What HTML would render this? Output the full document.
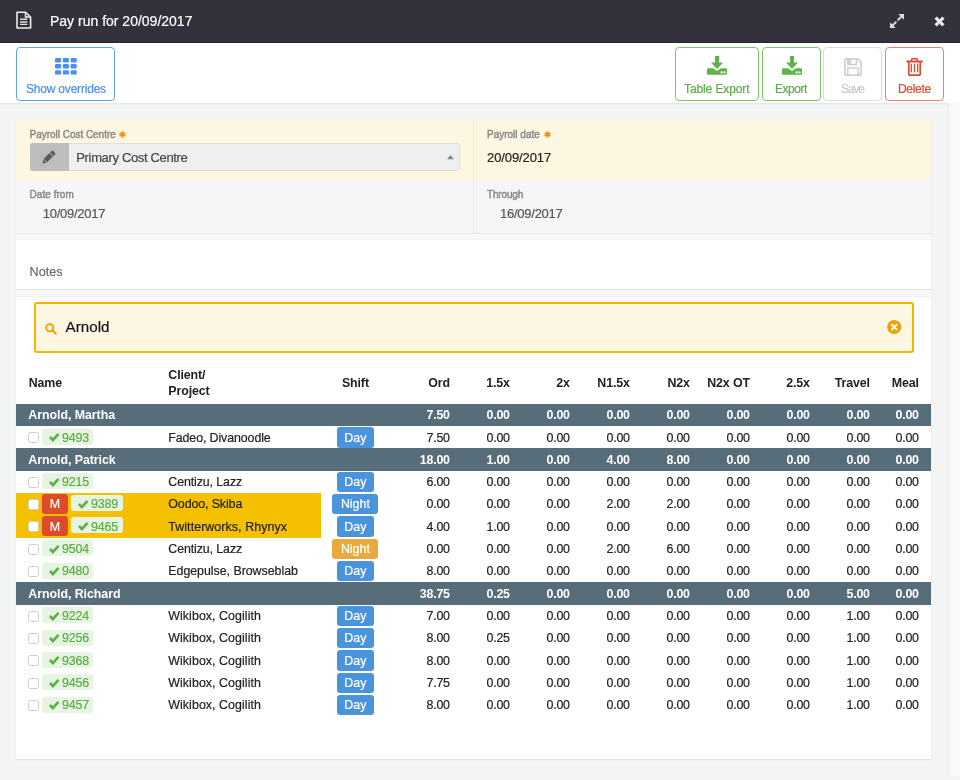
<!DOCTYPE html>
<html><head><meta charset="utf-8">
<style>
*{box-sizing:border-box;margin:0;padding:0}
html,body{width:960px;height:780px;overflow:hidden}
body{font-family:"Liberation Sans",sans-serif;background:#f3f4f4;position:relative;color:#222}
.t{position:absolute;white-space:nowrap;-webkit-text-stroke:0.2px currentColor}
.r{position:absolute}
svg{position:absolute;overflow:visible}
#wrap{position:absolute;left:0;top:0;width:960px;height:780px;will-change:transform}
</style></head><body><div id="wrap">
<div class="r" style="left:0px;top:0px;width:960px;height:43px;background:#33323c;border-bottom:1px solid #26252d;"></div>
<svg style="left:16px;top:10.5px" width="16" height="18" viewBox="0 0 16 18"><path d="M1 1.2h8.6l5 5v10.8h-13.6z" fill="none" stroke="#ececec" stroke-width="1.6" stroke-linejoin="round"/><path d="M9.5 1.2v4.9h5" fill="none" stroke="#ececec" stroke-width="1.5"/><path d="M4 8.3h7.3M4 11h7.3M4 13.4h7.3" stroke="#dcdcdc" stroke-width="1.4"/></svg>
<div class="t" style="left:50px;top:14.15px;font-size:14px;line-height:14px;color:#fff;font-weight:normal;">Pay run for 20/09/2017</div>
<svg style="left:889.5px;top:14px" width="14" height="14" viewBox="0 0 14 14"><path d="M8.3 0h5.7v5.7z M0 8.3v5.7h5.7z" fill="#dcdcdc"/><path d="M11.5 2.5L7.6 6.4M2.5 11.5l3.9-3.9" stroke="#dcdcdc" stroke-width="2"/></svg>
<svg style="left:934px;top:16px" width="11" height="11" viewBox="0 0 11 11"><path d="M1.6 1.6l7.8 7.8M9.4 1.6l-7.8 7.8" stroke="#e8e8e8" stroke-width="3.2"/></svg>
<div class="r" style="left:0px;top:43px;width:960px;height:60px;background:#fff;"></div>
<div class="r" style="left:0px;top:103px;width:960px;height:2px;background:linear-gradient(#e4e4e4,#f0f1f1);"></div>
<div class="r" style="left:16px;top:47px;width:99px;height:54px;border:1px solid #62a3ec;border-radius:4px;background:#fff"></div>
<svg style="left:55px;top:57.9px" width="23" height="17" viewBox="0 0 23 17"><g fill="#4590f2"><rect x="0.00" y="0.00" width="6.1" height="4.4" rx="1.2"/><rect x="0.00" y="6.10" width="6.1" height="4.4" rx="1.2"/><rect x="0.00" y="12.20" width="6.1" height="4.4" rx="1.2"/><rect x="7.80" y="0.00" width="6.1" height="4.4" rx="1.2"/><rect x="7.80" y="6.10" width="6.1" height="4.4" rx="1.2"/><rect x="7.80" y="12.20" width="6.1" height="4.4" rx="1.2"/><rect x="15.60" y="0.00" width="6.1" height="4.4" rx="1.2"/><rect x="15.60" y="6.10" width="6.1" height="4.4" rx="1.2"/><rect x="15.60" y="12.20" width="6.1" height="4.4" rx="1.2"/></g></svg>
<div class="t" style="left:26px;top:83.14px;font-size:12px;line-height:12px;color:#4a8ff0;font-weight:normal;letter-spacing:-0.2px;">Show overrides</div>
<div class="r" style="left:675px;top:47px;width:84px;height:54px;border:1px solid #7fc36e;border-radius:4px;background:#fff"></div>
<div class="r" style="left:762px;top:47px;width:59px;height:54px;border:1px solid #7fc36e;border-radius:4px;background:#fff"></div>
<div class="r" style="left:823px;top:47px;width:59px;height:54px;border:1px solid #dcdcdc;border-radius:4px;background:#fff"></div>
<div class="r" style="left:885px;top:47px;width:59px;height:54px;border:1px solid #e98171;border-radius:4px;background:#fff"></div>
<svg style="left:707px;top:56px" width="20" height="19" viewBox="0 0 20 19"><path d="M7.95 0.1h4.1v6.3h4l-6.05 6.5-6.05-6.5h4z" fill="#5fb34a"/><path d="M1.1 12.3h5l3.9 2.6 3.9-2.6h5a1.1 1.1 0 0 1 1.1 1.1v4.3a1.1 1.1 0 0 1-1.1 1.1h-17.8a1.1 1.1 0 0 1-1.1-1.1v-4.3a1.1 1.1 0 0 1 1.1-1.1z" fill="#5fb34a"/><circle cx="14.6" cy="16.4" r="1.15" fill="#fff"/><circle cx="17.6" cy="16.4" r="1.15" fill="#fff"/></svg>
<svg style="left:782px;top:56px" width="20" height="19" viewBox="0 0 20 19"><path d="M7.95 0.1h4.1v6.3h4l-6.05 6.5-6.05-6.5h4z" fill="#5fb34a"/><path d="M1.1 12.3h5l3.9 2.6 3.9-2.6h5a1.1 1.1 0 0 1 1.1 1.1v4.3a1.1 1.1 0 0 1-1.1 1.1h-17.8a1.1 1.1 0 0 1-1.1-1.1v-4.3a1.1 1.1 0 0 1 1.1-1.1z" fill="#5fb34a"/><circle cx="14.6" cy="16.4" r="1.15" fill="#fff"/><circle cx="17.6" cy="16.4" r="1.15" fill="#fff"/></svg>
<div class="t" style="left:684px;top:82.64px;font-size:12px;line-height:12px;color:#5aad45;font-weight:normal;letter-spacing:-0.1px;">Table Export</div>
<div class="t" style="left:775px;top:82.64px;font-size:12px;line-height:12px;color:#5aad45;font-weight:normal;letter-spacing:-0.45px;">Export</div>
<svg style="left:844px;top:58px" width="18" height="18" viewBox="0 0 18 18"><path d="M2 0.9h11.6l3.5 3.5v11.6a1.1 1.1 0 0 1-1.1 1.1h-14a1.1 1.1 0 0 1-1.1-1.1v-14a1.1 1.1 0 0 1 1.1-1.1z" fill="none" stroke="#cfcfcf" stroke-width="1.7" stroke-linejoin="round"/><path d="M3.8 1v5.4h8.6v-5.4" fill="none" stroke="#cfcfcf" stroke-width="1.5"/><rect x="3.8" y="1" width="3.4" height="5.4" fill="#cfcfcf"/><path d="M3.8 17v-6.9h10.4v6.9" fill="none" stroke="#cfcfcf" stroke-width="1.5"/></svg>
<div class="t" style="left:841px;top:82.64px;font-size:12px;line-height:12px;color:#c9c9c9;font-weight:normal;letter-spacing:-1.15px;">Save</div>
<svg style="left:906px;top:58px" width="17" height="18" viewBox="0 0 17 18"><path d="M1 3.5h15" stroke="#e04a2f" stroke-width="1.8" stroke-linecap="round"/><path d="M5.5 3.5v-1.8a1 1 0 0 1 1-1h4a1 1 0 0 1 1 1v1.8" fill="none" stroke="#e04a2f" stroke-width="1.6"/><path d="M2.8 4v12a1.2 1.2 0 0 0 1.2 1.2h9a1.2 1.2 0 0 0 1.2-1.2v-12" fill="none" stroke="#e04a2f" stroke-width="1.7"/><path d="M5.3 5.8v8.4M8.5 5.8v8.4M11.7 5.8v8.4" stroke="#e04a2f" stroke-width="1.3"/></svg>
<div class="t" style="left:898px;top:82.64px;font-size:12px;line-height:12px;color:#e04a2f;font-weight:normal;letter-spacing:-0.3px;">Delete</div>
<div class="r" style="left:948px;top:103px;width:12px;height:673px;background:#f9f9f9;border-left:1px solid #e9e9e9;"></div>
<div class="r" style="left:16px;top:120px;width:915px;height:639px;background:#fff;box-shadow:0 1px 1px rgba(0,0,0,0.07);"></div>
<div class="r" style="left:16px;top:120px;width:915px;height:60px;background:#fdf6e0;"></div>
<div class="r" style="left:473px;top:120px;width:1px;height:60px;background:#f1ead3;"></div>
<div class="t" style="left:29.6px;top:129.53px;font-size:10px;line-height:10px;color:#8a8a8a;font-weight:normal;letter-spacing:-0.03px;-webkit-text-stroke:0.45px #8a8a8a;">Payroll Cost Centre</div>
<svg style="left:119px;top:131px" width="7" height="7" viewBox="0 0 7 7"><path d="M3.5 0.3v6.4M0.6 1.9l5.8 3.2M0.6 5.1l5.8-3.2" stroke="#f18b0c" stroke-width="1.75"/></svg>
<div class="r" style="left:30px;top:143px;width:430px;height:28px;background:#efefef;border:1px solid #dedede;border-radius:3px;"></div>
<div class="r" style="left:30px;top:143px;width:39px;height:28px;background:#bdbdbd;border-radius:3px 0 0 3px;"></div>
<svg style="left:41.7px;top:151px" width="13" height="13" viewBox="0 0 13 13"><path d="M0.6 12.4L1.26 8.34 4.66 11.74z" fill="#5a5a5a"/><path d="M1.76 7.84L7.48 2.12 10.88 5.52 5.16 11.24z" fill="#5a5a5a"/><path d="M8.05 1.55L9.75 -0.15Q10.6 -0.6 11.45 0.1L13.0 1.7Q13.6 2.5 13.15 3.25L11.45 4.95z" fill="#5a5a5a"/></svg>
<div class="t" style="left:76.3px;top:150.60px;font-size:13px;line-height:13px;color:#444;font-weight:normal;letter-spacing:-0.35px;">Primary Cost Centre</div>
<svg style="left:447.4px;top:154.6px" width="7" height="5" viewBox="0 0 7 5"><path d="M0 4.3L3.4 0 6.8 4.3z" fill="#888"/></svg>
<div class="t" style="left:487px;top:129.53px;font-size:10px;line-height:10px;color:#8a8a8a;font-weight:normal;-webkit-text-stroke:0.45px #8a8a8a;">Payroll date</div>
<svg style="left:544px;top:131px" width="7" height="7" viewBox="0 0 7 7"><path d="M3.5 0.3v6.4M0.6 1.9l5.8 3.2M0.6 5.1l5.8-3.2" stroke="#f18b0c" stroke-width="1.75"/></svg>
<div class="t" style="left:487px;top:151.20px;font-size:13px;line-height:13px;color:#222;font-weight:normal;letter-spacing:-0.1px;">20/09/2017</div>
<div class="r" style="left:16px;top:180px;width:915px;height:53px;background:#f6f6f6;"></div>
<div class="r" style="left:473px;top:180px;width:1px;height:53px;background:#e9e9e9;"></div>
<div class="r" style="left:16px;top:233px;width:915px;height:1px;background:#e6e6e6;"></div>
<div class="r" style="left:16px;top:234px;width:915px;height:6px;background:#f8f8f8;"></div>
<div class="r" style="left:16px;top:239px;width:915px;height:1px;background:#f0f0f0;"></div>
<div class="t" style="left:29.5px;top:190.13px;font-size:10px;line-height:10px;color:#8a8a8a;font-weight:normal;letter-spacing:0.05px;-webkit-text-stroke:0.45px #8a8a8a;">Date from</div>
<div class="t" style="left:42.7px;top:206.90px;font-size:13px;line-height:13px;color:#555;font-weight:normal;letter-spacing:-0.25px;">10/09/2017</div>
<div class="t" style="left:487px;top:190.13px;font-size:10px;line-height:10px;color:#8a8a8a;font-weight:normal;letter-spacing:-0.15px;-webkit-text-stroke:0.45px #8a8a8a;">Through</div>
<div class="t" style="left:500px;top:206.90px;font-size:13px;line-height:13px;color:#555;font-weight:normal;letter-spacing:-0.25px;">16/09/2017</div>
<div class="t" style="left:29.6px;top:265.93px;font-size:12.6px;line-height:12.6px;color:#6b6b6b;font-weight:normal;">Notes</div>
<div class="r" style="left:16px;top:289px;width:915px;height:1px;background:#e6e6e6;"></div>
<div class="r" style="left:16px;top:290px;width:915px;height:7px;background:#f8f8f8;"></div>
<div class="r" style="left:16px;top:296px;width:915px;height:1px;background:#f0f0f0;"></div>
<div class="r" style="left:34px;top:301.5px;width:880px;height:51px;background:#fdf6e3;border:2px solid #f4b400;border-radius:3px;"></div>
<svg style="left:45px;top:322.5px" width="12" height="12" viewBox="0 0 12 12"><circle cx="4.7" cy="4.7" r="3.6" fill="none" stroke="#f0a000" stroke-width="1.8"/><path d="M7.4 7.4l3.4 3.4" stroke="#f0a000" stroke-width="2" stroke-linecap="round"/></svg>
<div class="t" style="left:65.6px;top:319.33px;font-size:15.2px;line-height:15.2px;color:#151515;font-weight:normal;">Arnold</div>
<svg style="left:887px;top:320px" width="14" height="14" viewBox="0 0 14 14"><circle cx="7.2" cy="7" r="7.1" fill="#f0a000"/><path d="M4.3 4.1l5.8 5.8M10.1 4.1l-5.8 5.8" stroke="#fff" stroke-width="2"/></svg>
<div class="t" style="left:28.7px;top:377.00px;font-size:12.4px;line-height:12.4px;color:#222;font-weight:bold;letter-spacing:-0.1px;-webkit-text-stroke:0;">Name</div>
<div class="t" style="left:168.3px;top:368.70px;font-size:12.4px;line-height:12.4px;color:#222;font-weight:bold;letter-spacing:-0.1px;-webkit-text-stroke:0;">Client/</div>
<div class="t" style="left:168.3px;top:384.70px;font-size:12.4px;line-height:12.4px;color:#222;font-weight:bold;letter-spacing:-0.1px;-webkit-text-stroke:0;">Project</div>
<div class="t" style="left:255.39999999999998px;width:200px;text-align:center;top:377.00px;font-size:12.4px;line-height:12.4px;color:#222;font-weight:bold;letter-spacing:-0.1px;-webkit-text-stroke:0;">Shift</div>
<div class="t" style="right:510px;top:377.00px;font-size:12.4px;line-height:12.4px;color:#222;font-weight:bold;letter-spacing:-0.1px;margin-right:0.1px;-webkit-text-stroke:0;">Ord</div>
<div class="t" style="right:450px;top:377.00px;font-size:12.4px;line-height:12.4px;color:#222;font-weight:bold;letter-spacing:-0.1px;margin-right:0.1px;-webkit-text-stroke:0;">1.5x</div>
<div class="t" style="right:390px;top:377.00px;font-size:12.4px;line-height:12.4px;color:#222;font-weight:bold;letter-spacing:-0.1px;margin-right:0.1px;-webkit-text-stroke:0;">2x</div>
<div class="t" style="right:330px;top:377.00px;font-size:12.4px;line-height:12.4px;color:#222;font-weight:bold;letter-spacing:-0.1px;margin-right:0.1px;-webkit-text-stroke:0;">N1.5x</div>
<div class="t" style="right:270px;top:377.00px;font-size:12.4px;line-height:12.4px;color:#222;font-weight:bold;letter-spacing:-0.1px;margin-right:0.1px;-webkit-text-stroke:0;">N2x</div>
<div class="t" style="right:210px;top:377.00px;font-size:12.4px;line-height:12.4px;color:#222;font-weight:bold;letter-spacing:-0.1px;margin-right:0.1px;-webkit-text-stroke:0;">N2x OT</div>
<div class="t" style="right:150px;top:377.00px;font-size:12.4px;line-height:12.4px;color:#222;font-weight:bold;letter-spacing:-0.1px;margin-right:0.1px;-webkit-text-stroke:0;">2.5x</div>
<div class="t" style="right:90px;top:377.00px;font-size:12.4px;line-height:12.4px;color:#222;font-weight:bold;letter-spacing:-0.1px;margin-right:0.1px;-webkit-text-stroke:0;">Travel</div>
<div class="t" style="right:41px;top:377.00px;font-size:12.4px;line-height:12.4px;color:#222;font-weight:bold;letter-spacing:-0.1px;margin-right:0.1px;-webkit-text-stroke:0;">Meal</div>
<div class="r" style="left:16px;top:403.70px;width:915px;height:22.32px;background:#576d7a;"></div>
<div class="t" style="left:28.3px;top:409.20px;font-size:12.4px;line-height:12.4px;color:#fff;font-weight:bold;letter-spacing:-0.05px;-webkit-text-stroke:0;">Arnold, Martha</div>
<div class="t" style="right:510px;top:409.20px;font-size:12.4px;line-height:12.4px;color:#fff;font-weight:bold;letter-spacing:-0.2px;margin-right:0.2px;-webkit-text-stroke:0;">7.50</div>
<div class="t" style="right:450px;top:409.20px;font-size:12.4px;line-height:12.4px;color:#fff;font-weight:bold;letter-spacing:-0.2px;margin-right:0.2px;-webkit-text-stroke:0;">0.00</div>
<div class="t" style="right:390px;top:409.20px;font-size:12.4px;line-height:12.4px;color:#fff;font-weight:bold;letter-spacing:-0.2px;margin-right:0.2px;-webkit-text-stroke:0;">0.00</div>
<div class="t" style="right:330px;top:409.20px;font-size:12.4px;line-height:12.4px;color:#fff;font-weight:bold;letter-spacing:-0.2px;margin-right:0.2px;-webkit-text-stroke:0;">0.00</div>
<div class="t" style="right:270px;top:409.20px;font-size:12.4px;line-height:12.4px;color:#fff;font-weight:bold;letter-spacing:-0.2px;margin-right:0.2px;-webkit-text-stroke:0;">0.00</div>
<div class="t" style="right:210px;top:409.20px;font-size:12.4px;line-height:12.4px;color:#fff;font-weight:bold;letter-spacing:-0.2px;margin-right:0.2px;-webkit-text-stroke:0;">0.00</div>
<div class="t" style="right:150px;top:409.20px;font-size:12.4px;line-height:12.4px;color:#fff;font-weight:bold;letter-spacing:-0.2px;margin-right:0.2px;-webkit-text-stroke:0;">0.00</div>
<div class="t" style="right:90px;top:409.20px;font-size:12.4px;line-height:12.4px;color:#fff;font-weight:bold;letter-spacing:-0.2px;margin-right:0.2px;-webkit-text-stroke:0;">0.00</div>
<div class="t" style="right:41px;top:409.20px;font-size:12.4px;line-height:12.4px;color:#fff;font-weight:bold;letter-spacing:-0.2px;margin-right:0.2px;-webkit-text-stroke:0;">0.00</div>
<div class="r" style="left:28px;top:432.02px;width:11px;height:11px;background:#fff;border:1px solid #cdcdcd;border-radius:2.5px;"></div>
<div class="r" style="left:42px;top:428.82px;width:51px;height:16px;background:#e6f4e1;border-radius:3px;"></div>
<svg style="left:48.9px;top:433.02px" width="10" height="8" viewBox="0 0 10 8"><path d="M0.9 4.0l3 3 5.6-6.2" fill="none" stroke="#5bb146" stroke-width="2.6"/></svg>
<div class="t" style="left:62px;top:431.52px;font-size:12.4px;line-height:12.4px;color:#5aad45;font-weight:normal;letter-spacing:-0.1px;">9493</div>
<div class="t" style="left:168.3px;top:431.52px;font-size:12.4px;line-height:12.4px;color:#222;font-weight:normal;letter-spacing:-0.1px;">Fadeo, Divanoodle</div>
<div class="r" style="left:336.6px;top:427.02px;width:37.6px;height:20.5px;background:#4a94de;border-radius:3px;"></div>
<div class="t" style="left:255.39999999999998px;width:200px;text-align:center;top:431.52px;font-size:12.4px;line-height:12.4px;color:#fff;font-weight:normal;">Day</div>
<div class="t" style="right:510px;top:431.52px;font-size:12.4px;line-height:12.4px;color:#222;font-weight:normal;letter-spacing:-0.2px;margin-right:0.2px;">7.50</div>
<div class="t" style="right:450px;top:431.52px;font-size:12.4px;line-height:12.4px;color:#222;font-weight:normal;letter-spacing:-0.2px;margin-right:0.2px;">0.00</div>
<div class="t" style="right:390px;top:431.52px;font-size:12.4px;line-height:12.4px;color:#222;font-weight:normal;letter-spacing:-0.2px;margin-right:0.2px;">0.00</div>
<div class="t" style="right:330px;top:431.52px;font-size:12.4px;line-height:12.4px;color:#222;font-weight:normal;letter-spacing:-0.2px;margin-right:0.2px;">0.00</div>
<div class="t" style="right:270px;top:431.52px;font-size:12.4px;line-height:12.4px;color:#222;font-weight:normal;letter-spacing:-0.2px;margin-right:0.2px;">0.00</div>
<div class="t" style="right:210px;top:431.52px;font-size:12.4px;line-height:12.4px;color:#222;font-weight:normal;letter-spacing:-0.2px;margin-right:0.2px;">0.00</div>
<div class="t" style="right:150px;top:431.52px;font-size:12.4px;line-height:12.4px;color:#222;font-weight:normal;letter-spacing:-0.2px;margin-right:0.2px;">0.00</div>
<div class="t" style="right:90px;top:431.52px;font-size:12.4px;line-height:12.4px;color:#222;font-weight:normal;letter-spacing:-0.2px;margin-right:0.2px;">0.00</div>
<div class="t" style="right:41px;top:431.52px;font-size:12.4px;line-height:12.4px;color:#222;font-weight:normal;letter-spacing:-0.2px;margin-right:0.2px;">0.00</div>
<div class="r" style="left:16px;top:448.34px;width:915px;height:22.32px;background:#576d7a;"></div>
<div class="t" style="left:28.3px;top:453.84px;font-size:12.4px;line-height:12.4px;color:#fff;font-weight:bold;letter-spacing:-0.05px;-webkit-text-stroke:0;">Arnold, Patrick</div>
<div class="t" style="right:510px;top:453.84px;font-size:12.4px;line-height:12.4px;color:#fff;font-weight:bold;letter-spacing:-0.2px;margin-right:0.2px;-webkit-text-stroke:0;">18.00</div>
<div class="t" style="right:450px;top:453.84px;font-size:12.4px;line-height:12.4px;color:#fff;font-weight:bold;letter-spacing:-0.2px;margin-right:0.2px;-webkit-text-stroke:0;">1.00</div>
<div class="t" style="right:390px;top:453.84px;font-size:12.4px;line-height:12.4px;color:#fff;font-weight:bold;letter-spacing:-0.2px;margin-right:0.2px;-webkit-text-stroke:0;">0.00</div>
<div class="t" style="right:330px;top:453.84px;font-size:12.4px;line-height:12.4px;color:#fff;font-weight:bold;letter-spacing:-0.2px;margin-right:0.2px;-webkit-text-stroke:0;">4.00</div>
<div class="t" style="right:270px;top:453.84px;font-size:12.4px;line-height:12.4px;color:#fff;font-weight:bold;letter-spacing:-0.2px;margin-right:0.2px;-webkit-text-stroke:0;">8.00</div>
<div class="t" style="right:210px;top:453.84px;font-size:12.4px;line-height:12.4px;color:#fff;font-weight:bold;letter-spacing:-0.2px;margin-right:0.2px;-webkit-text-stroke:0;">0.00</div>
<div class="t" style="right:150px;top:453.84px;font-size:12.4px;line-height:12.4px;color:#fff;font-weight:bold;letter-spacing:-0.2px;margin-right:0.2px;-webkit-text-stroke:0;">0.00</div>
<div class="t" style="right:90px;top:453.84px;font-size:12.4px;line-height:12.4px;color:#fff;font-weight:bold;letter-spacing:-0.2px;margin-right:0.2px;-webkit-text-stroke:0;">0.00</div>
<div class="t" style="right:41px;top:453.84px;font-size:12.4px;line-height:12.4px;color:#fff;font-weight:bold;letter-spacing:-0.2px;margin-right:0.2px;-webkit-text-stroke:0;">0.00</div>
<div class="r" style="left:28px;top:476.66px;width:11px;height:11px;background:#fff;border:1px solid #cdcdcd;border-radius:2.5px;"></div>
<div class="r" style="left:42px;top:473.46px;width:51px;height:16px;background:#e6f4e1;border-radius:3px;"></div>
<svg style="left:48.9px;top:477.66px" width="10" height="8" viewBox="0 0 10 8"><path d="M0.9 4.0l3 3 5.6-6.2" fill="none" stroke="#5bb146" stroke-width="2.6"/></svg>
<div class="t" style="left:62px;top:476.16px;font-size:12.4px;line-height:12.4px;color:#5aad45;font-weight:normal;letter-spacing:-0.1px;">9215</div>
<div class="t" style="left:168.3px;top:476.16px;font-size:12.4px;line-height:12.4px;color:#222;font-weight:normal;letter-spacing:-0.1px;">Centizu, Lazz</div>
<div class="r" style="left:336.6px;top:471.66px;width:37.6px;height:20.5px;background:#4a94de;border-radius:3px;"></div>
<div class="t" style="left:255.39999999999998px;width:200px;text-align:center;top:476.16px;font-size:12.4px;line-height:12.4px;color:#fff;font-weight:normal;">Day</div>
<div class="t" style="right:510px;top:476.16px;font-size:12.4px;line-height:12.4px;color:#222;font-weight:normal;letter-spacing:-0.2px;margin-right:0.2px;">6.00</div>
<div class="t" style="right:450px;top:476.16px;font-size:12.4px;line-height:12.4px;color:#222;font-weight:normal;letter-spacing:-0.2px;margin-right:0.2px;">0.00</div>
<div class="t" style="right:390px;top:476.16px;font-size:12.4px;line-height:12.4px;color:#222;font-weight:normal;letter-spacing:-0.2px;margin-right:0.2px;">0.00</div>
<div class="t" style="right:330px;top:476.16px;font-size:12.4px;line-height:12.4px;color:#222;font-weight:normal;letter-spacing:-0.2px;margin-right:0.2px;">0.00</div>
<div class="t" style="right:270px;top:476.16px;font-size:12.4px;line-height:12.4px;color:#222;font-weight:normal;letter-spacing:-0.2px;margin-right:0.2px;">0.00</div>
<div class="t" style="right:210px;top:476.16px;font-size:12.4px;line-height:12.4px;color:#222;font-weight:normal;letter-spacing:-0.2px;margin-right:0.2px;">0.00</div>
<div class="t" style="right:150px;top:476.16px;font-size:12.4px;line-height:12.4px;color:#222;font-weight:normal;letter-spacing:-0.2px;margin-right:0.2px;">0.00</div>
<div class="t" style="right:90px;top:476.16px;font-size:12.4px;line-height:12.4px;color:#222;font-weight:normal;letter-spacing:-0.2px;margin-right:0.2px;">0.00</div>
<div class="t" style="right:41px;top:476.16px;font-size:12.4px;line-height:12.4px;color:#222;font-weight:normal;letter-spacing:-0.2px;margin-right:0.2px;">0.00</div>
<div class="r" style="left:16px;top:492.98px;width:305px;height:22.32px;background:#f5c000;"></div>
<div class="r" style="left:28px;top:498.98px;width:11px;height:11px;background:#fff;border:1px solid #cdcdcd;border-radius:2.5px;"></div>
<div class="r" style="left:42px;top:493.58px;width:26px;height:20px;background:#de4b2b;border-radius:3px;"></div>
<div class="t" style="left:-45px;width:200px;text-align:center;top:498.48px;font-size:12.4px;line-height:12.4px;color:#fff;font-weight:normal;">M</div>
<div class="r" style="left:71px;top:494.78px;width:52px;height:16px;background:#e6f4e1;border-radius:3px;"></div>
<svg style="left:77.9px;top:499.98px" width="10" height="8" viewBox="0 0 10 8"><path d="M0.9 4.0l3 3 5.6-6.2" fill="none" stroke="#5bb146" stroke-width="2.6"/></svg>
<div class="t" style="left:91px;top:498.48px;font-size:12.4px;line-height:12.4px;color:#5aad45;font-weight:normal;letter-spacing:-0.1px;">9389</div>
<div class="t" style="left:168.3px;top:498.48px;font-size:12.4px;line-height:12.4px;color:#222;font-weight:normal;letter-spacing:-0.1px;">Oodoo, Skiba</div>
<div class="r" style="left:332.2px;top:493.98px;width:46.3px;height:20.5px;background:#4a94de;border-radius:3px;"></div>
<div class="t" style="left:255.39999999999998px;width:200px;text-align:center;top:498.48px;font-size:12.4px;line-height:12.4px;color:#fff;font-weight:normal;">Night</div>
<div class="t" style="right:510px;top:498.48px;font-size:12.4px;line-height:12.4px;color:#222;font-weight:normal;letter-spacing:-0.2px;margin-right:0.2px;">0.00</div>
<div class="t" style="right:450px;top:498.48px;font-size:12.4px;line-height:12.4px;color:#222;font-weight:normal;letter-spacing:-0.2px;margin-right:0.2px;">0.00</div>
<div class="t" style="right:390px;top:498.48px;font-size:12.4px;line-height:12.4px;color:#222;font-weight:normal;letter-spacing:-0.2px;margin-right:0.2px;">0.00</div>
<div class="t" style="right:330px;top:498.48px;font-size:12.4px;line-height:12.4px;color:#222;font-weight:normal;letter-spacing:-0.2px;margin-right:0.2px;">2.00</div>
<div class="t" style="right:270px;top:498.48px;font-size:12.4px;line-height:12.4px;color:#222;font-weight:normal;letter-spacing:-0.2px;margin-right:0.2px;">2.00</div>
<div class="t" style="right:210px;top:498.48px;font-size:12.4px;line-height:12.4px;color:#222;font-weight:normal;letter-spacing:-0.2px;margin-right:0.2px;">0.00</div>
<div class="t" style="right:150px;top:498.48px;font-size:12.4px;line-height:12.4px;color:#222;font-weight:normal;letter-spacing:-0.2px;margin-right:0.2px;">0.00</div>
<div class="t" style="right:90px;top:498.48px;font-size:12.4px;line-height:12.4px;color:#222;font-weight:normal;letter-spacing:-0.2px;margin-right:0.2px;">0.00</div>
<div class="t" style="right:41px;top:498.48px;font-size:12.4px;line-height:12.4px;color:#222;font-weight:normal;letter-spacing:-0.2px;margin-right:0.2px;">0.00</div>
<div class="r" style="left:16px;top:515.30px;width:305px;height:22.32px;background:#f5c000;"></div>
<div class="r" style="left:28px;top:521.30px;width:11px;height:11px;background:#fff;border:1px solid #cdcdcd;border-radius:2.5px;"></div>
<div class="r" style="left:42px;top:515.90px;width:26px;height:20px;background:#de4b2b;border-radius:3px;"></div>
<div class="t" style="left:-45px;width:200px;text-align:center;top:520.80px;font-size:12.4px;line-height:12.4px;color:#fff;font-weight:normal;">M</div>
<div class="r" style="left:71px;top:517.10px;width:52px;height:16px;background:#e6f4e1;border-radius:3px;"></div>
<svg style="left:77.9px;top:522.30px" width="10" height="8" viewBox="0 0 10 8"><path d="M0.9 4.0l3 3 5.6-6.2" fill="none" stroke="#5bb146" stroke-width="2.6"/></svg>
<div class="t" style="left:91px;top:520.80px;font-size:12.4px;line-height:12.4px;color:#5aad45;font-weight:normal;letter-spacing:-0.1px;">9465</div>
<div class="t" style="left:168.3px;top:520.80px;font-size:12.4px;line-height:12.4px;color:#222;font-weight:normal;letter-spacing:0.08px;">Twitterworks, Rhynyx</div>
<div class="r" style="left:336.6px;top:516.30px;width:37.6px;height:20.5px;background:#4a94de;border-radius:3px;"></div>
<div class="t" style="left:255.39999999999998px;width:200px;text-align:center;top:520.80px;font-size:12.4px;line-height:12.4px;color:#fff;font-weight:normal;">Day</div>
<div class="t" style="right:510px;top:520.80px;font-size:12.4px;line-height:12.4px;color:#222;font-weight:normal;letter-spacing:-0.2px;margin-right:0.2px;">4.00</div>
<div class="t" style="right:450px;top:520.80px;font-size:12.4px;line-height:12.4px;color:#222;font-weight:normal;letter-spacing:-0.2px;margin-right:0.2px;">1.00</div>
<div class="t" style="right:390px;top:520.80px;font-size:12.4px;line-height:12.4px;color:#222;font-weight:normal;letter-spacing:-0.2px;margin-right:0.2px;">0.00</div>
<div class="t" style="right:330px;top:520.80px;font-size:12.4px;line-height:12.4px;color:#222;font-weight:normal;letter-spacing:-0.2px;margin-right:0.2px;">0.00</div>
<div class="t" style="right:270px;top:520.80px;font-size:12.4px;line-height:12.4px;color:#222;font-weight:normal;letter-spacing:-0.2px;margin-right:0.2px;">0.00</div>
<div class="t" style="right:210px;top:520.80px;font-size:12.4px;line-height:12.4px;color:#222;font-weight:normal;letter-spacing:-0.2px;margin-right:0.2px;">0.00</div>
<div class="t" style="right:150px;top:520.80px;font-size:12.4px;line-height:12.4px;color:#222;font-weight:normal;letter-spacing:-0.2px;margin-right:0.2px;">0.00</div>
<div class="t" style="right:90px;top:520.80px;font-size:12.4px;line-height:12.4px;color:#222;font-weight:normal;letter-spacing:-0.2px;margin-right:0.2px;">0.00</div>
<div class="t" style="right:41px;top:520.80px;font-size:12.4px;line-height:12.4px;color:#222;font-weight:normal;letter-spacing:-0.2px;margin-right:0.2px;">0.00</div>
<div class="r" style="left:28px;top:543.62px;width:11px;height:11px;background:#fff;border:1px solid #cdcdcd;border-radius:2.5px;"></div>
<div class="r" style="left:42px;top:540.42px;width:51px;height:16px;background:#e6f4e1;border-radius:3px;"></div>
<svg style="left:48.9px;top:544.62px" width="10" height="8" viewBox="0 0 10 8"><path d="M0.9 4.0l3 3 5.6-6.2" fill="none" stroke="#5bb146" stroke-width="2.6"/></svg>
<div class="t" style="left:62px;top:543.12px;font-size:12.4px;line-height:12.4px;color:#5aad45;font-weight:normal;letter-spacing:-0.1px;">9504</div>
<div class="t" style="left:168.3px;top:543.12px;font-size:12.4px;line-height:12.4px;color:#222;font-weight:normal;letter-spacing:-0.1px;">Centizu, Lazz</div>
<div class="r" style="left:332.2px;top:538.62px;width:46.3px;height:20.5px;background:#e6ab3c;border-radius:3px;"></div>
<div class="t" style="left:255.39999999999998px;width:200px;text-align:center;top:543.12px;font-size:12.4px;line-height:12.4px;color:#fff;font-weight:normal;">Night</div>
<div class="t" style="right:510px;top:543.12px;font-size:12.4px;line-height:12.4px;color:#222;font-weight:normal;letter-spacing:-0.2px;margin-right:0.2px;">0.00</div>
<div class="t" style="right:450px;top:543.12px;font-size:12.4px;line-height:12.4px;color:#222;font-weight:normal;letter-spacing:-0.2px;margin-right:0.2px;">0.00</div>
<div class="t" style="right:390px;top:543.12px;font-size:12.4px;line-height:12.4px;color:#222;font-weight:normal;letter-spacing:-0.2px;margin-right:0.2px;">0.00</div>
<div class="t" style="right:330px;top:543.12px;font-size:12.4px;line-height:12.4px;color:#222;font-weight:normal;letter-spacing:-0.2px;margin-right:0.2px;">2.00</div>
<div class="t" style="right:270px;top:543.12px;font-size:12.4px;line-height:12.4px;color:#222;font-weight:normal;letter-spacing:-0.2px;margin-right:0.2px;">6.00</div>
<div class="t" style="right:210px;top:543.12px;font-size:12.4px;line-height:12.4px;color:#222;font-weight:normal;letter-spacing:-0.2px;margin-right:0.2px;">0.00</div>
<div class="t" style="right:150px;top:543.12px;font-size:12.4px;line-height:12.4px;color:#222;font-weight:normal;letter-spacing:-0.2px;margin-right:0.2px;">0.00</div>
<div class="t" style="right:90px;top:543.12px;font-size:12.4px;line-height:12.4px;color:#222;font-weight:normal;letter-spacing:-0.2px;margin-right:0.2px;">0.00</div>
<div class="t" style="right:41px;top:543.12px;font-size:12.4px;line-height:12.4px;color:#222;font-weight:normal;letter-spacing:-0.2px;margin-right:0.2px;">0.00</div>
<div class="r" style="left:28px;top:565.94px;width:11px;height:11px;background:#fff;border:1px solid #cdcdcd;border-radius:2.5px;"></div>
<div class="r" style="left:42px;top:562.74px;width:51px;height:16px;background:#e6f4e1;border-radius:3px;"></div>
<svg style="left:48.9px;top:566.94px" width="10" height="8" viewBox="0 0 10 8"><path d="M0.9 4.0l3 3 5.6-6.2" fill="none" stroke="#5bb146" stroke-width="2.6"/></svg>
<div class="t" style="left:62px;top:565.44px;font-size:12.4px;line-height:12.4px;color:#5aad45;font-weight:normal;letter-spacing:-0.1px;">9480</div>
<div class="t" style="left:168.3px;top:565.44px;font-size:12.4px;line-height:12.4px;color:#222;font-weight:normal;letter-spacing:-0.03px;">Edgepulse, Browseblab</div>
<div class="r" style="left:336.6px;top:560.94px;width:37.6px;height:20.5px;background:#4a94de;border-radius:3px;"></div>
<div class="t" style="left:255.39999999999998px;width:200px;text-align:center;top:565.44px;font-size:12.4px;line-height:12.4px;color:#fff;font-weight:normal;">Day</div>
<div class="t" style="right:510px;top:565.44px;font-size:12.4px;line-height:12.4px;color:#222;font-weight:normal;letter-spacing:-0.2px;margin-right:0.2px;">8.00</div>
<div class="t" style="right:450px;top:565.44px;font-size:12.4px;line-height:12.4px;color:#222;font-weight:normal;letter-spacing:-0.2px;margin-right:0.2px;">0.00</div>
<div class="t" style="right:390px;top:565.44px;font-size:12.4px;line-height:12.4px;color:#222;font-weight:normal;letter-spacing:-0.2px;margin-right:0.2px;">0.00</div>
<div class="t" style="right:330px;top:565.44px;font-size:12.4px;line-height:12.4px;color:#222;font-weight:normal;letter-spacing:-0.2px;margin-right:0.2px;">0.00</div>
<div class="t" style="right:270px;top:565.44px;font-size:12.4px;line-height:12.4px;color:#222;font-weight:normal;letter-spacing:-0.2px;margin-right:0.2px;">0.00</div>
<div class="t" style="right:210px;top:565.44px;font-size:12.4px;line-height:12.4px;color:#222;font-weight:normal;letter-spacing:-0.2px;margin-right:0.2px;">0.00</div>
<div class="t" style="right:150px;top:565.44px;font-size:12.4px;line-height:12.4px;color:#222;font-weight:normal;letter-spacing:-0.2px;margin-right:0.2px;">0.00</div>
<div class="t" style="right:90px;top:565.44px;font-size:12.4px;line-height:12.4px;color:#222;font-weight:normal;letter-spacing:-0.2px;margin-right:0.2px;">0.00</div>
<div class="t" style="right:41px;top:565.44px;font-size:12.4px;line-height:12.4px;color:#222;font-weight:normal;letter-spacing:-0.2px;margin-right:0.2px;">0.00</div>
<div class="r" style="left:16px;top:582.26px;width:915px;height:22.32px;background:#576d7a;"></div>
<div class="t" style="left:28.3px;top:587.76px;font-size:12.4px;line-height:12.4px;color:#fff;font-weight:bold;letter-spacing:-0.05px;-webkit-text-stroke:0;">Arnold, Richard</div>
<div class="t" style="right:510px;top:587.76px;font-size:12.4px;line-height:12.4px;color:#fff;font-weight:bold;letter-spacing:-0.2px;margin-right:0.2px;-webkit-text-stroke:0;">38.75</div>
<div class="t" style="right:450px;top:587.76px;font-size:12.4px;line-height:12.4px;color:#fff;font-weight:bold;letter-spacing:-0.2px;margin-right:0.2px;-webkit-text-stroke:0;">0.25</div>
<div class="t" style="right:390px;top:587.76px;font-size:12.4px;line-height:12.4px;color:#fff;font-weight:bold;letter-spacing:-0.2px;margin-right:0.2px;-webkit-text-stroke:0;">0.00</div>
<div class="t" style="right:330px;top:587.76px;font-size:12.4px;line-height:12.4px;color:#fff;font-weight:bold;letter-spacing:-0.2px;margin-right:0.2px;-webkit-text-stroke:0;">0.00</div>
<div class="t" style="right:270px;top:587.76px;font-size:12.4px;line-height:12.4px;color:#fff;font-weight:bold;letter-spacing:-0.2px;margin-right:0.2px;-webkit-text-stroke:0;">0.00</div>
<div class="t" style="right:210px;top:587.76px;font-size:12.4px;line-height:12.4px;color:#fff;font-weight:bold;letter-spacing:-0.2px;margin-right:0.2px;-webkit-text-stroke:0;">0.00</div>
<div class="t" style="right:150px;top:587.76px;font-size:12.4px;line-height:12.4px;color:#fff;font-weight:bold;letter-spacing:-0.2px;margin-right:0.2px;-webkit-text-stroke:0;">0.00</div>
<div class="t" style="right:90px;top:587.76px;font-size:12.4px;line-height:12.4px;color:#fff;font-weight:bold;letter-spacing:-0.2px;margin-right:0.2px;-webkit-text-stroke:0;">5.00</div>
<div class="t" style="right:41px;top:587.76px;font-size:12.4px;line-height:12.4px;color:#fff;font-weight:bold;letter-spacing:-0.2px;margin-right:0.2px;-webkit-text-stroke:0;">0.00</div>
<div class="r" style="left:28px;top:610.58px;width:11px;height:11px;background:#fff;border:1px solid #cdcdcd;border-radius:2.5px;"></div>
<div class="r" style="left:42px;top:607.38px;width:51px;height:16px;background:#e6f4e1;border-radius:3px;"></div>
<svg style="left:48.9px;top:611.58px" width="10" height="8" viewBox="0 0 10 8"><path d="M0.9 4.0l3 3 5.6-6.2" fill="none" stroke="#5bb146" stroke-width="2.6"/></svg>
<div class="t" style="left:62px;top:610.08px;font-size:12.4px;line-height:12.4px;color:#5aad45;font-weight:normal;letter-spacing:-0.1px;">9224</div>
<div class="t" style="left:168.3px;top:610.08px;font-size:12.4px;line-height:12.4px;color:#222;font-weight:normal;letter-spacing:0.06px;">Wikibox, Cogilith</div>
<div class="r" style="left:336.6px;top:605.58px;width:37.6px;height:20.5px;background:#4a94de;border-radius:3px;"></div>
<div class="t" style="left:255.39999999999998px;width:200px;text-align:center;top:610.08px;font-size:12.4px;line-height:12.4px;color:#fff;font-weight:normal;">Day</div>
<div class="t" style="right:510px;top:610.08px;font-size:12.4px;line-height:12.4px;color:#222;font-weight:normal;letter-spacing:-0.2px;margin-right:0.2px;">7.00</div>
<div class="t" style="right:450px;top:610.08px;font-size:12.4px;line-height:12.4px;color:#222;font-weight:normal;letter-spacing:-0.2px;margin-right:0.2px;">0.00</div>
<div class="t" style="right:390px;top:610.08px;font-size:12.4px;line-height:12.4px;color:#222;font-weight:normal;letter-spacing:-0.2px;margin-right:0.2px;">0.00</div>
<div class="t" style="right:330px;top:610.08px;font-size:12.4px;line-height:12.4px;color:#222;font-weight:normal;letter-spacing:-0.2px;margin-right:0.2px;">0.00</div>
<div class="t" style="right:270px;top:610.08px;font-size:12.4px;line-height:12.4px;color:#222;font-weight:normal;letter-spacing:-0.2px;margin-right:0.2px;">0.00</div>
<div class="t" style="right:210px;top:610.08px;font-size:12.4px;line-height:12.4px;color:#222;font-weight:normal;letter-spacing:-0.2px;margin-right:0.2px;">0.00</div>
<div class="t" style="right:150px;top:610.08px;font-size:12.4px;line-height:12.4px;color:#222;font-weight:normal;letter-spacing:-0.2px;margin-right:0.2px;">0.00</div>
<div class="t" style="right:90px;top:610.08px;font-size:12.4px;line-height:12.4px;color:#222;font-weight:normal;letter-spacing:-0.2px;margin-right:0.2px;">1.00</div>
<div class="t" style="right:41px;top:610.08px;font-size:12.4px;line-height:12.4px;color:#222;font-weight:normal;letter-spacing:-0.2px;margin-right:0.2px;">0.00</div>
<div class="r" style="left:28px;top:632.90px;width:11px;height:11px;background:#fff;border:1px solid #cdcdcd;border-radius:2.5px;"></div>
<div class="r" style="left:42px;top:629.70px;width:51px;height:16px;background:#e6f4e1;border-radius:3px;"></div>
<svg style="left:48.9px;top:633.90px" width="10" height="8" viewBox="0 0 10 8"><path d="M0.9 4.0l3 3 5.6-6.2" fill="none" stroke="#5bb146" stroke-width="2.6"/></svg>
<div class="t" style="left:62px;top:632.40px;font-size:12.4px;line-height:12.4px;color:#5aad45;font-weight:normal;letter-spacing:-0.1px;">9256</div>
<div class="t" style="left:168.3px;top:632.40px;font-size:12.4px;line-height:12.4px;color:#222;font-weight:normal;letter-spacing:0.06px;">Wikibox, Cogilith</div>
<div class="r" style="left:336.6px;top:627.90px;width:37.6px;height:20.5px;background:#4a94de;border-radius:3px;"></div>
<div class="t" style="left:255.39999999999998px;width:200px;text-align:center;top:632.40px;font-size:12.4px;line-height:12.4px;color:#fff;font-weight:normal;">Day</div>
<div class="t" style="right:510px;top:632.40px;font-size:12.4px;line-height:12.4px;color:#222;font-weight:normal;letter-spacing:-0.2px;margin-right:0.2px;">8.00</div>
<div class="t" style="right:450px;top:632.40px;font-size:12.4px;line-height:12.4px;color:#222;font-weight:normal;letter-spacing:-0.2px;margin-right:0.2px;">0.25</div>
<div class="t" style="right:390px;top:632.40px;font-size:12.4px;line-height:12.4px;color:#222;font-weight:normal;letter-spacing:-0.2px;margin-right:0.2px;">0.00</div>
<div class="t" style="right:330px;top:632.40px;font-size:12.4px;line-height:12.4px;color:#222;font-weight:normal;letter-spacing:-0.2px;margin-right:0.2px;">0.00</div>
<div class="t" style="right:270px;top:632.40px;font-size:12.4px;line-height:12.4px;color:#222;font-weight:normal;letter-spacing:-0.2px;margin-right:0.2px;">0.00</div>
<div class="t" style="right:210px;top:632.40px;font-size:12.4px;line-height:12.4px;color:#222;font-weight:normal;letter-spacing:-0.2px;margin-right:0.2px;">0.00</div>
<div class="t" style="right:150px;top:632.40px;font-size:12.4px;line-height:12.4px;color:#222;font-weight:normal;letter-spacing:-0.2px;margin-right:0.2px;">0.00</div>
<div class="t" style="right:90px;top:632.40px;font-size:12.4px;line-height:12.4px;color:#222;font-weight:normal;letter-spacing:-0.2px;margin-right:0.2px;">1.00</div>
<div class="t" style="right:41px;top:632.40px;font-size:12.4px;line-height:12.4px;color:#222;font-weight:normal;letter-spacing:-0.2px;margin-right:0.2px;">0.00</div>
<div class="r" style="left:28px;top:655.22px;width:11px;height:11px;background:#fff;border:1px solid #cdcdcd;border-radius:2.5px;"></div>
<div class="r" style="left:42px;top:652.02px;width:51px;height:16px;background:#e6f4e1;border-radius:3px;"></div>
<svg style="left:48.9px;top:656.22px" width="10" height="8" viewBox="0 0 10 8"><path d="M0.9 4.0l3 3 5.6-6.2" fill="none" stroke="#5bb146" stroke-width="2.6"/></svg>
<div class="t" style="left:62px;top:654.72px;font-size:12.4px;line-height:12.4px;color:#5aad45;font-weight:normal;letter-spacing:-0.1px;">9368</div>
<div class="t" style="left:168.3px;top:654.72px;font-size:12.4px;line-height:12.4px;color:#222;font-weight:normal;letter-spacing:0.06px;">Wikibox, Cogilith</div>
<div class="r" style="left:336.6px;top:650.22px;width:37.6px;height:20.5px;background:#4a94de;border-radius:3px;"></div>
<div class="t" style="left:255.39999999999998px;width:200px;text-align:center;top:654.72px;font-size:12.4px;line-height:12.4px;color:#fff;font-weight:normal;">Day</div>
<div class="t" style="right:510px;top:654.72px;font-size:12.4px;line-height:12.4px;color:#222;font-weight:normal;letter-spacing:-0.2px;margin-right:0.2px;">8.00</div>
<div class="t" style="right:450px;top:654.72px;font-size:12.4px;line-height:12.4px;color:#222;font-weight:normal;letter-spacing:-0.2px;margin-right:0.2px;">0.00</div>
<div class="t" style="right:390px;top:654.72px;font-size:12.4px;line-height:12.4px;color:#222;font-weight:normal;letter-spacing:-0.2px;margin-right:0.2px;">0.00</div>
<div class="t" style="right:330px;top:654.72px;font-size:12.4px;line-height:12.4px;color:#222;font-weight:normal;letter-spacing:-0.2px;margin-right:0.2px;">0.00</div>
<div class="t" style="right:270px;top:654.72px;font-size:12.4px;line-height:12.4px;color:#222;font-weight:normal;letter-spacing:-0.2px;margin-right:0.2px;">0.00</div>
<div class="t" style="right:210px;top:654.72px;font-size:12.4px;line-height:12.4px;color:#222;font-weight:normal;letter-spacing:-0.2px;margin-right:0.2px;">0.00</div>
<div class="t" style="right:150px;top:654.72px;font-size:12.4px;line-height:12.4px;color:#222;font-weight:normal;letter-spacing:-0.2px;margin-right:0.2px;">0.00</div>
<div class="t" style="right:90px;top:654.72px;font-size:12.4px;line-height:12.4px;color:#222;font-weight:normal;letter-spacing:-0.2px;margin-right:0.2px;">1.00</div>
<div class="t" style="right:41px;top:654.72px;font-size:12.4px;line-height:12.4px;color:#222;font-weight:normal;letter-spacing:-0.2px;margin-right:0.2px;">0.00</div>
<div class="r" style="left:28px;top:677.54px;width:11px;height:11px;background:#fff;border:1px solid #cdcdcd;border-radius:2.5px;"></div>
<div class="r" style="left:42px;top:674.34px;width:51px;height:16px;background:#e6f4e1;border-radius:3px;"></div>
<svg style="left:48.9px;top:678.54px" width="10" height="8" viewBox="0 0 10 8"><path d="M0.9 4.0l3 3 5.6-6.2" fill="none" stroke="#5bb146" stroke-width="2.6"/></svg>
<div class="t" style="left:62px;top:677.04px;font-size:12.4px;line-height:12.4px;color:#5aad45;font-weight:normal;letter-spacing:-0.1px;">9456</div>
<div class="t" style="left:168.3px;top:677.04px;font-size:12.4px;line-height:12.4px;color:#222;font-weight:normal;letter-spacing:0.06px;">Wikibox, Cogilith</div>
<div class="r" style="left:336.6px;top:672.54px;width:37.6px;height:20.5px;background:#4a94de;border-radius:3px;"></div>
<div class="t" style="left:255.39999999999998px;width:200px;text-align:center;top:677.04px;font-size:12.4px;line-height:12.4px;color:#fff;font-weight:normal;">Day</div>
<div class="t" style="right:510px;top:677.04px;font-size:12.4px;line-height:12.4px;color:#222;font-weight:normal;letter-spacing:-0.2px;margin-right:0.2px;">7.75</div>
<div class="t" style="right:450px;top:677.04px;font-size:12.4px;line-height:12.4px;color:#222;font-weight:normal;letter-spacing:-0.2px;margin-right:0.2px;">0.00</div>
<div class="t" style="right:390px;top:677.04px;font-size:12.4px;line-height:12.4px;color:#222;font-weight:normal;letter-spacing:-0.2px;margin-right:0.2px;">0.00</div>
<div class="t" style="right:330px;top:677.04px;font-size:12.4px;line-height:12.4px;color:#222;font-weight:normal;letter-spacing:-0.2px;margin-right:0.2px;">0.00</div>
<div class="t" style="right:270px;top:677.04px;font-size:12.4px;line-height:12.4px;color:#222;font-weight:normal;letter-spacing:-0.2px;margin-right:0.2px;">0.00</div>
<div class="t" style="right:210px;top:677.04px;font-size:12.4px;line-height:12.4px;color:#222;font-weight:normal;letter-spacing:-0.2px;margin-right:0.2px;">0.00</div>
<div class="t" style="right:150px;top:677.04px;font-size:12.4px;line-height:12.4px;color:#222;font-weight:normal;letter-spacing:-0.2px;margin-right:0.2px;">0.00</div>
<div class="t" style="right:90px;top:677.04px;font-size:12.4px;line-height:12.4px;color:#222;font-weight:normal;letter-spacing:-0.2px;margin-right:0.2px;">1.00</div>
<div class="t" style="right:41px;top:677.04px;font-size:12.4px;line-height:12.4px;color:#222;font-weight:normal;letter-spacing:-0.2px;margin-right:0.2px;">0.00</div>
<div class="r" style="left:28px;top:699.86px;width:11px;height:11px;background:#fff;border:1px solid #cdcdcd;border-radius:2.5px;"></div>
<div class="r" style="left:42px;top:696.66px;width:51px;height:16px;background:#e6f4e1;border-radius:3px;"></div>
<svg style="left:48.9px;top:700.86px" width="10" height="8" viewBox="0 0 10 8"><path d="M0.9 4.0l3 3 5.6-6.2" fill="none" stroke="#5bb146" stroke-width="2.6"/></svg>
<div class="t" style="left:62px;top:699.36px;font-size:12.4px;line-height:12.4px;color:#5aad45;font-weight:normal;letter-spacing:-0.1px;">9457</div>
<div class="t" style="left:168.3px;top:699.36px;font-size:12.4px;line-height:12.4px;color:#222;font-weight:normal;letter-spacing:0.06px;">Wikibox, Cogilith</div>
<div class="r" style="left:336.6px;top:694.86px;width:37.6px;height:20.5px;background:#4a94de;border-radius:3px;"></div>
<div class="t" style="left:255.39999999999998px;width:200px;text-align:center;top:699.36px;font-size:12.4px;line-height:12.4px;color:#fff;font-weight:normal;">Day</div>
<div class="t" style="right:510px;top:699.36px;font-size:12.4px;line-height:12.4px;color:#222;font-weight:normal;letter-spacing:-0.2px;margin-right:0.2px;">8.00</div>
<div class="t" style="right:450px;top:699.36px;font-size:12.4px;line-height:12.4px;color:#222;font-weight:normal;letter-spacing:-0.2px;margin-right:0.2px;">0.00</div>
<div class="t" style="right:390px;top:699.36px;font-size:12.4px;line-height:12.4px;color:#222;font-weight:normal;letter-spacing:-0.2px;margin-right:0.2px;">0.00</div>
<div class="t" style="right:330px;top:699.36px;font-size:12.4px;line-height:12.4px;color:#222;font-weight:normal;letter-spacing:-0.2px;margin-right:0.2px;">0.00</div>
<div class="t" style="right:270px;top:699.36px;font-size:12.4px;line-height:12.4px;color:#222;font-weight:normal;letter-spacing:-0.2px;margin-right:0.2px;">0.00</div>
<div class="t" style="right:210px;top:699.36px;font-size:12.4px;line-height:12.4px;color:#222;font-weight:normal;letter-spacing:-0.2px;margin-right:0.2px;">0.00</div>
<div class="t" style="right:150px;top:699.36px;font-size:12.4px;line-height:12.4px;color:#222;font-weight:normal;letter-spacing:-0.2px;margin-right:0.2px;">0.00</div>
<div class="t" style="right:90px;top:699.36px;font-size:12.4px;line-height:12.4px;color:#222;font-weight:normal;letter-spacing:-0.2px;margin-right:0.2px;">1.00</div>
<div class="t" style="right:41px;top:699.36px;font-size:12.4px;line-height:12.4px;color:#222;font-weight:normal;letter-spacing:-0.2px;margin-right:0.2px;">0.00</div>
</div></body></html>
